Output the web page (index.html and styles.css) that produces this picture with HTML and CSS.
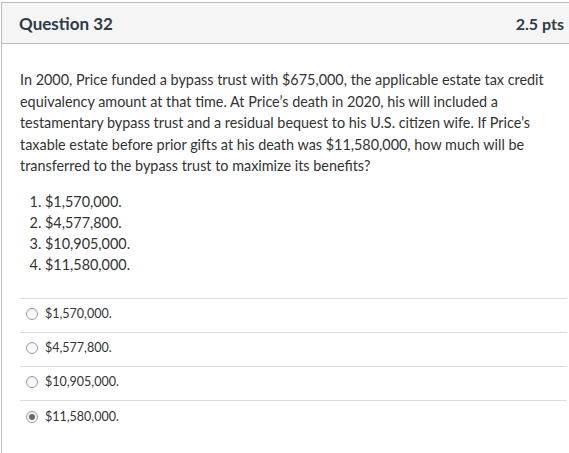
FILE: index.html
```html
<!DOCTYPE html>
<html>
<head>
<meta charset="utf-8">
<link rel="stylesheet" href="styles.css">
</head>
<body>
<div class="question">
  <div class="header">
    <span class="title">Question 32</span>
    <span class="points">2.5 pts</span>
  </div>
  <div class="content">
    <p class="text">In 2000, Price funded a bypass trust with $675,000, the applicable estate tax credit equivalency amount at that time. At Price’s death in 2020, his will included a testamentary bypass trust and a residual bequest to his U.S. citizen wife. If Price’s taxable estate before prior gifts at his death was $11,580,000, how much will be transferred to the bypass trust to maximize its benefits?</p>
    <ol class="choices">
      <li>$1,570,000.</li>
      <li>$4,577,800.</li>
      <li>$10,905,000.</li>
      <li>$11,580,000.</li>
    </ol>
    <div class="answers">
      <div class="answer"><span class="radio"></span><span class="label">$1,570,000.</span></div>
      <div class="answer"><span class="radio"></span><span class="label">$4,577,800.</span></div>
      <div class="answer"><span class="radio"></span><span class="label">$10,905,000.</span></div>
      <div class="answer last"><span class="radio checked"></span><span class="label">$11,580,000.</span></div>
    </div>
  </div>
</div>
</body>
</html>
```
FILE: styles.css
```css
html, body {
  margin: 0;
  padding: 0;
  background: #ffffff;
}
body {
  font-family: Lato, "Open Sans", sans-serif;
  color: #333333;
  overflow: hidden;
}
.question {
  margin: 2px 0 0 1px;
  border-left: 1px solid #b9bcbf;
  border-top: 1px solid #b9bcbf;
  height: 460px;
}
.header {
  display: flex;
  justify-content: space-between;
  align-items: center;
  height: 40px;
  background: #f5f5f5;
  border-bottom: 1px solid #b9bcbf;
  padding: 0 5px 0 17px;
}
.title, .points {
  font-weight: 700;
  color: #2d3b45;
}
.title {
  font-size: 17px;
}
.points {
  font-size: 16px;
}
.content {
  padding: 25px 0 0 18px;
}
.text {
  margin: 0;
  font-size: 14.4px;
  line-height: 21.5px;
  padding-right: 10px;
}
.choices {
  margin: 14px 0 0 0;
  padding-left: 25px;
  font-size: 14.4px;
  line-height: 21px;
}
.answers {
  margin: 23px 2px 0 0;
}
.answer {
  box-sizing: border-box;
  display: flex;
  align-items: center;
  height: 34px;
  padding-bottom: 3px;
  border-top: 1px solid #dcdcdc;
  font-size: 12.5px;
  color: #333;
}
.answer.last {
  padding-bottom: 1px;
}
.radio {
  box-sizing: border-box;
  width: 12px;
  height: 12px;
  border: 1px solid #9a9a9a;
  border-radius: 50%;
  margin: 0 7px 0 6px;
  background: linear-gradient(#f0f0f0, #ffffff);
  display: flex;
  align-items: center;
  justify-content: center;
}
.radio.checked::after {
  content: "";
  width: 6px;
  height: 6px;
  border-radius: 50%;
  background: #6a6a6a;
}
```
